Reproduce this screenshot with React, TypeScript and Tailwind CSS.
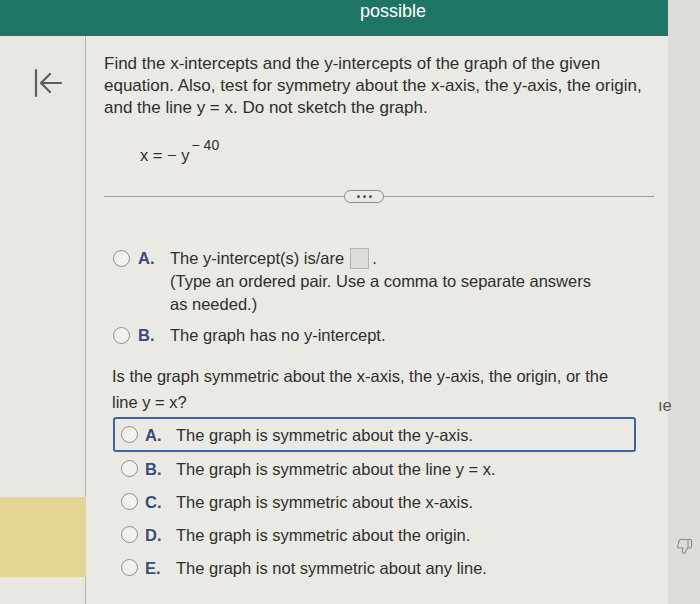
import { ThumbsDown } from 'lucide-react';

const font = { fontFamily: '"Liberation Sans", Arial, sans-serif' };

function Radio({ className = '' }: { className?: string }) {
  return (
    <span
      className={`inline-block w-[17px] h-[17px] rounded-full border-[1.5px] border-[#8a8d92] bg-[#f2f1ee] shrink-0 ${className}`}
    />
  );
}

function Option({
  letter,
  children,
}: {
  letter: string;
  children: React.ReactNode;
}) {
  return (
    <div className="flex items-center h-[33px]">
      <Radio />
      <span className="ml-[7px] w-[31px] font-bold text-[#3b4a7a]">{letter}.</span>
      <span>{children}</span>
    </div>
  );
}

export default function App() {
  return (
    <div
      className="w-[700px] h-[604px] flex flex-col bg-[#e4e3de] text-[#2f2f2f] text-[16.5px] leading-[22px] overflow-hidden"
      style={font}
    >
      <div className="flex h-[36px] shrink-0">
        <div className="w-[668px] bg-[#1f7563] flex items-start justify-center pl-[118px]">
          <span className="text-white text-[18px] leading-[20px] mt-[1px]">possible</span>
        </div>
        <div className="flex-1 bg-[#dcdbd6]" />
      </div>

      <div className="flex flex-1">
        {/* left rail */}
        <div className="w-[86px] shrink-0 flex flex-col bg-[#e8e7e2] border-r border-[#b9b8b3]">
          <div className="mt-[31px] ml-[33px]">
            <svg width="30" height="32" viewBox="0 0 30 32" fill="none" stroke="#5d5d5d" strokeWidth="2.2" strokeLinecap="round" strokeLinejoin="round">
              <path d="M3 3v26" />
              <path d="M9 16h19" />
              <path d="M17 7l-9 9 9 9" />
            </svg>
          </div>
          <div className="mt-[398px] h-[80px] w-[98px] bg-[#e3d594]" />
        </div>

        {/* main */}
        <div className="w-[582px] shrink-0 bg-[#eae9e4] pl-[18px] pr-[18px]">
          <p className="mt-[17px] w-[560px] text-[17px] leading-[22px]">
            Find the x-intercepts and the y-intercepts of the graph of the given
            equation. Also, test for symmetry about the x-axis, the y-axis, the origin,
            and the line y = x. Do not sketch the graph.
          </p>

          <div className="mt-[19px] ml-[36px] flex items-start">
            <span className="mt-[6px]">x = − y</span>
            <span className="text-[14px] leading-[14px] ml-[2px]">− 40</span>
          </div>

          <div className="mt-[24px] flex items-center w-[550px]">
            <div className="flex-1 h-px bg-[#9d9c98]" />
            <div className="w-[40px] h-[13px] rounded-full border border-[#8a8a88] flex items-center justify-center gap-[3px]">
              <span className="w-[3px] h-[3px] rounded-full bg-[#555]" />
              <span className="w-[3px] h-[3px] rounded-full bg-[#555]" />
              <span className="w-[3px] h-[3px] rounded-full bg-[#555]" />
            </div>
            <div className="w-[270px] h-px bg-[#9d9c98]" />
          </div>

          <div className="mt-[44px] ml-[9px]">
            <div className="flex items-start">
              <Radio className="mt-[3px]" />
              <span className="ml-[8px] w-[32px] font-bold text-[#3b4a7a]">A.</span>
              <div>
                <div className="flex items-center">
                  The y-intercept(s) is/are
                  <span className="inline-block w-[19px] h-[21px] border border-[#b5b5b5] bg-[#dcdcda] ml-[6px] mr-[3px]" />
                  .
                </div>
                <div className="mt-[1px] leading-[23px]">
                  (Type an ordered pair. Use a comma to separate answers
                  <br />
                  as needed.)
                </div>
              </div>
            </div>
            <div className="flex items-center mt-[8px]">
              <Radio />
              <span className="ml-[8px] w-[32px] font-bold text-[#3b4a7a]">B.</span>
              <span>The graph has no y-intercept.</span>
            </div>
          </div>

          <p className="mt-[17px] ml-[8px] w-[510px] leading-[26px]">
            Is the graph symmetric about the x-axis, the y-axis, the origin, or the
            line y = x?
          </p>

          <div className="mt-[2px] ml-[9px] w-[523px]">
            <div className="flex items-center h-[35px] border-2 border-[#3f64a6] rounded-[3px] pl-[6px]">
              <Radio />
              <span className="ml-[7px] w-[31px] font-bold text-[#3b4a7a]">A.</span>
              <span>The graph is symmetric about the y-axis.</span>
            </div>
            <div className="pl-[8px]">
              <Option letter="B">The graph is symmetric about the line y = x.</Option>
              <Option letter="C">The graph is symmetric about the x-axis.</Option>
              <Option letter="D">The graph is symmetric about the origin.</Option>
              <Option letter="E">The graph is not symmetric about any line.</Option>
            </div>
          </div>
        </div>

        {/* right strip */}
        <div className="flex-1 flex flex-col bg-[#dddcd7]">
          <span className="mt-[358px] -ml-[10px] text-[#555]">ıe</span>
          <ThumbsDown className="mt-[122px] ml-[8px] text-[#8a8a8a]" size={17} strokeWidth={1.5} />
        </div>
      </div>
    </div>
  );
}
